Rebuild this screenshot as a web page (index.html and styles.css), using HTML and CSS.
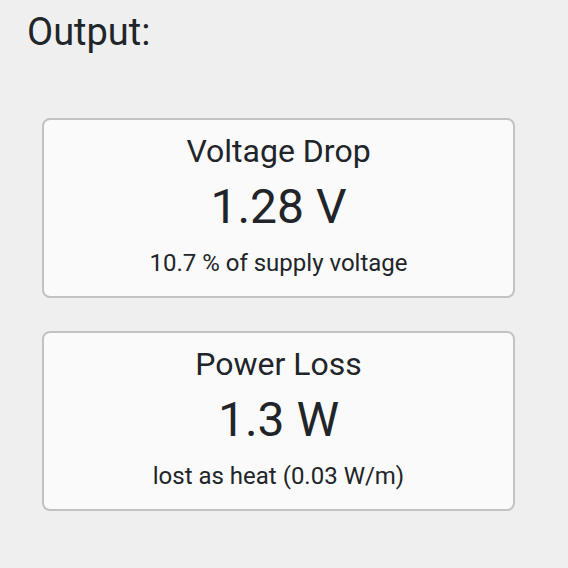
FILE: index.html
```html
<!DOCTYPE html>
<html lang="en">
<head>
  <meta charset="UTF-8" />
  <title>Output</title>
  <link rel="stylesheet" href="styles.css">
</head>
<body>
  <div class="container">
    <h2>Output:</h2>

    <div class="results">
      <div class="result-card">
        <div class="result-title">Voltage Drop</div>
        <div class="result-value">1.28 V</div>
        <div class="result-note">10.7 % of supply voltage</div>
      </div>

      <div class="result-card">
        <div class="result-title">Power Loss</div>
        <div class="result-value">1.3 W</div>
        <div class="result-note">lost as heat (0.03 W/m)</div>
      </div>
    </div>
  </div>
</body>
</html>
```

FILE: styles.css
```css
body {
  margin: 0;
  font-family: Roboto, 'Liberation Sans', sans-serif;
  background-color: #efefef;
  color: #212529;
}

.container {
  padding: 8px 0 0 27px;
}

h2 {
  margin: 0;
  font-size: 38px;
  font-weight: 400;
  line-height: 48px;
}

.results {
  margin: 62px 53px 0 15px;
  display: flex;
  flex-direction: column;
  gap: 33px;
}

.result-card {
  background-color: #fafafa;
  border: 2px solid #c2c2c2;
  border-radius: 8px;
  text-align: center;
  padding: 11px 16px 17px;
}

.result-title {
  font-size: 32px;
  line-height: 40px;
}

.result-value {
  font-size: 48px;
  line-height: 64px;
  margin-top: 4px;
}

.result-note {
  font-size: 24px;
  line-height: 32px;
  margin-top: 8px;
}
```
